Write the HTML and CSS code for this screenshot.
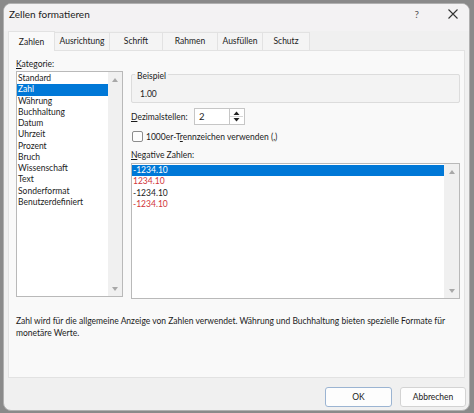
FILE: index.html
```html
<!DOCTYPE html>
<html lang="de">
<head>
    <meta charset="UTF-8">
    <title>Zellen formatieren</title>
    <link rel="stylesheet" href="styles.css">
</head>
<body>
    <div class="window">
        <!-- Title bar -->
        <div class="titlebar">
            <span class="title">Zellen formatieren</span>
            <span class="help">?</span>
            <svg class="close" width="10" height="10" viewBox="0 0 10 10">
                <path d="M0.5 0.5 L9.5 9.5 M9.5 0.5 L0.5 9.5" stroke="#333" stroke-width="1.1" fill="none"/>
            </svg>
        </div>

        <!-- Tabs -->
        <div class="tabs">
            <div class="tab active" style="width: 47px">Zahlen</div>
            <div class="tab" style="width: 55px">Ausrichtung</div>
            <div class="tab" style="width: 53px">Schrift</div>
            <div class="tab" style="width: 55px">Rahmen</div>
            <div class="tab" style="width: 45px">Ausfüllen</div>
            <div class="tab" style="width: 47px">Schutz</div>
        </div>

        <!-- Tab page -->
        <div class="panel">
            <div class="columns">
                <div class="category">
                    <div class="label"><u>K</u>ategorie:</div>
                    <div class="listbox cat-list">
                        <ul class="items">
                            <li>Standard</li>
                            <li class="selected">Zahl</li>
                            <li>Währung</li>
                            <li>Buchhaltung</li>
                            <li>Datum</li>
                            <li>Uhrzeit</li>
                            <li>Prozent</li>
                            <li>Bruch</li>
                            <li>Wissenschaft</li>
                            <li>Text</li>
                            <li>Sonderformat</li>
                            <li>Benutzerdefiniert</li>
                        </ul>
                        <div class="scrollbar">
                            <span class="arrow up"></span>
                            <span class="arrow down"></span>
                        </div>
                    </div>
                </div>

                <div class="options">
                    <fieldset class="sample">
                        <legend>Beispiel</legend>
                        <div class="sample-value">1.00</div>
                    </fieldset>

                    <div class="decimals">
                        <span class="decimals-label"><u>D</u>ezimalstellen:</span>
                        <span class="spin-value">2</span>
                        <span class="spin-buttons">
                            <svg width="13" height="15" viewBox="0 0 13 15">
                                <path d="M3.5 6 L6.5 2.5 L9.5 6 Z" fill="#222"/>
                                <line x1="0" y1="7.5" x2="13" y2="7.5" stroke="#d6d6d6" stroke-width="1"/>
                                <path d="M3.5 9 L6.5 12.5 L9.5 9 Z" fill="#222"/>
                            </svg>
                        </span>
                    </div>

                    <div class="check-row">
                        <span class="checkbox"></span>
                        <span>1000er-T<u>r</u>ennzeichen verwenden (,)</span>
                    </div>

                    <div class="label neg-label"><u>N</u>egative Zahlen:</div>
                    <div class="listbox neg-list">
                        <ul class="items">
                            <li class="selected">-1234.10</li>
                            <li class="red">1234.10</li>
                            <li>-1234.10</li>
                            <li class="red">-1234.10</li>
                        </ul>
                        <div class="scrollbar wide">
                            <span class="arrow up"></span>
                            <span class="arrow down"></span>
                        </div>
                    </div>
                </div>
            </div>

            <p class="description">Zahl wird für die allgemeine Anzeige von Zahlen verwendet. Währung und Buchhaltung bieten spezielle Formate für monetäre Werte.</p>
        </div>

        <!-- Buttons -->
        <div class="footer">
            <button class="btn default">OK</button>
            <button class="btn">Abbrechen</button>
        </div>
    </div>
</body>
</html>
```

FILE: styles.css
```css
/* Reset and base styles */
* {
    margin: 0;
    padding: 0;
    box-sizing: border-box;
    font-family: Lato, "Liberation Sans", sans-serif;
}

body {
    background-color: #8a8a8a;
    width: 474px;
    height: 413px;
    overflow: hidden;
}

/* Dialog window */
.window {
    margin: 3px 0 0 3px;
    width: 467px;
    height: 408px;
    background-color: #f0f0f0;
    border: 1px solid #b0b0b0;
    border-radius: 8px;
    overflow: hidden;
    display: flex;
    flex-direction: column;
    color: #1b1b1b;
    font-size: 8.5px;
}

/* Title bar */
.titlebar {
    height: 27px;
    display: flex;
    align-items: flex-start;
    padding: 3px 11px 0 5px;
    background-color: #f3f2f3;
}

.title {
    flex: 1;
    font-size: 10px;
    line-height: 14px;
}

.help {
    font-size: 10px;
    line-height: 14px;
    color: #555;
    margin-right: 29px;
}

.close {
    margin-top: 2px;
}

/* Tabs */
.tabs {
    display: flex;
    height: 19px;
    padding-left: 4px;
}

.tab {
    height: 18px;
    margin-top: 1px;
    text-align: center;
    line-height: 17px;
    background-color: #f4f4f4;
    border: 1px solid #e2e2e2;
    border-left: none;
    border-bottom: none;
}

.tab.active {
    position: relative;
    z-index: 1;
    height: 20px;
    margin-top: 0;
    line-height: 20px;
    background-color: #f9f9f9;
    border-left: 1px solid #e2e2e2;
}

/* Tab page */
.panel {
    margin: 0 4px;
    height: 328px;
    background-color: #f9f9f9;
    border: 1px solid #e2e2e2;
    padding: 7px 4px 0 7px;
}

.columns {
    display: grid;
    grid-template-columns: 107px 329px;
    column-gap: 8px;
    align-items: start;
}

.label {
    line-height: 12px;
    margin-bottom: 1px;
}

/* List boxes */
.listbox {
    display: flex;
    background-color: #fff;
    border: 1px solid #b9b9b9;
}

.cat-list {
    height: 226px;
}

.neg-list {
    height: 136px;
}

.items {
    flex: 1;
    list-style-type: none;
    padding: 1px 0;
}

.items li {
    line-height: 11.25px;
    padding-left: 1px;
    white-space: nowrap;
}

.items li.selected {
    background-color: #0078d7;
    color: #fff;
}

.items li.red {
    color: #d13438;
}

.scrollbar {
    width: 14px;
    background-color: #f0f0f0;
    display: flex;
    flex-direction: column;
    justify-content: space-between;
    align-items: center;
    padding: 6px 0 5px;
}

.scrollbar.wide {
    width: 15px;
}

.arrow {
    width: 0;
    height: 0;
    border-left: 3.5px solid transparent;
    border-right: 3.5px solid transparent;
}

.arrow.up {
    border-bottom: 4px solid #a8a8a8;
}

.arrow.down {
    border-top: 4px solid #a8a8a8;
}

/* Right column */
.options {
    margin-top: 8px;
}

.sample {
    border: 1px solid #dcdcdc;
    border-radius: 2px;
    background-color: #f3f3f3;
    padding: 0 8px 2px;
}

.sample legend {
    padding: 4px 2px 0;
    margin-left: -5px;
    line-height: 12px;
}

.sample-value {
    margin-top: 6px;
    line-height: 12px;
}

.decimals {
    display: flex;
    align-items: center;
    height: 17px;
    margin-top: 5px;
}

.decimals-label {
    width: 63px;
}

.spin-value {
    width: 36px;
    height: 17px;
    padding-left: 4px;
    line-height: 15px;
    font-size: 9.5px;
    background-color: #fff;
    border: 1px solid #c6c6c6;
}

.spin-buttons {
    display: flex;
    width: 15px;
    height: 17px;
    background-color: #fff;
    border: 1px solid #c6c6c6;
    border-left: none;
}

.check-row {
    display: flex;
    align-items: center;
    gap: 3px;
    height: 11px;
    margin-top: 6px;
}

.checkbox {
    width: 11px;
    height: 11px;
    margin-left: 1px;
    background-color: #fdfdfd;
    border: 1px solid #8c8c8c;
    border-radius: 2px;
}

.neg-label {
    margin-top: 7px;
    margin-bottom: 2px;
}

/* Description */
.description {
    margin-top: 16px;
    line-height: 12px;
}

/* Footer buttons */
.footer {
    flex: 1;
    display: flex;
    justify-content: flex-end;
    gap: 8px;
    padding: 9px 3px 0 0;
}

.btn {
    width: 66px;
    height: 20px;
    font-size: 8.5px;
    color: #1b1b1b;
    background-color: #fdfdfd;
    border: 1px solid #d3d3d3;
    border-radius: 3px;
}

.btn.default {
    width: 67px;
    border-color: #9bb4d2;
}
```
